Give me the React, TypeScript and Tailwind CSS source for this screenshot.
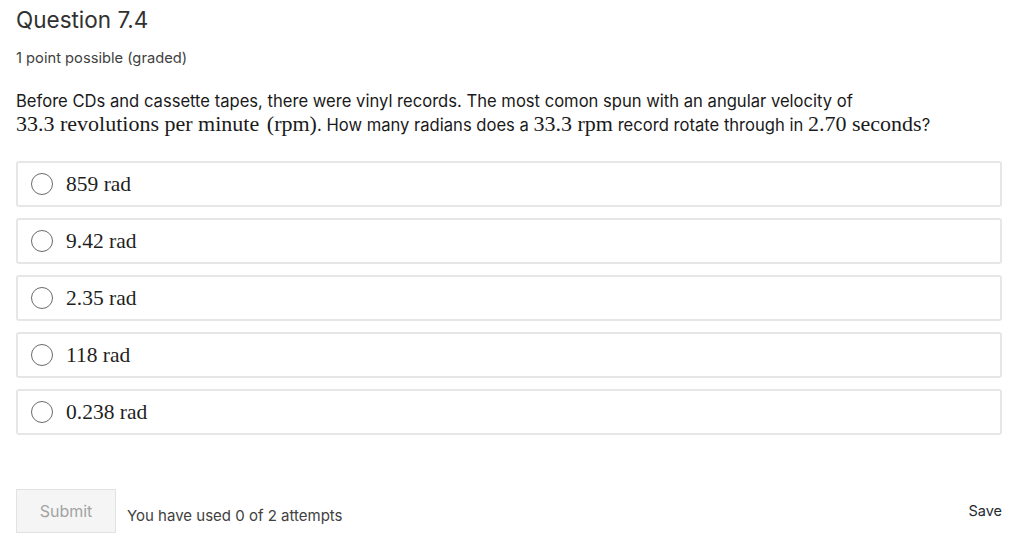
import { useState } from "react";

const options = ["859", "9.42", "2.35", "118", "0.238"];

const M = ({ children, className = "" }: { children: React.ReactNode; className?: string }) => (
  <span className={`font-['Liberation_Serif',serif] text-[22px] leading-[20px] ${className}`}>{children}</span>
);

export default function App() {
  const [selected, setSelected] = useState<number | null>(null);

  return (
    <div className="min-h-[539px] bg-white px-4 font-['Inter',sans-serif] text-[#313131]">
      <h2 className="pt-[6px] text-[22.5px] leading-[28px] font-normal">Question 7.4</h2>
      <p className="mt-[14px] text-[14.7px] leading-[20px] text-[#414141]">1 point possible (graded)</p>

      <p className="mt-[21px] text-[16.6px] leading-[24px] text-[#1a1a1a]">
        Before CDs and cassette tapes, there were vinyl records. The most comon spun with an angular velocity of{" "}
        <br />
        <M>33.3 revolutions per minute</M> <M className="ml-[3px]">(rpm)</M>. How many radians does a{" "}
        <M>33.3 rpm</M> record rotate through in <M>2.70 seconds</M>?
      </p>

      <div className="mt-[24px] flex flex-col gap-[11px] pr-[6px]">
        {options.map((value, index) => (
          <label
            key={value}
            className="flex h-[46px] cursor-pointer items-center gap-[13px] rounded-[3px] border-2 border-[#e6e6e6] px-[13px]"
          >
            <input
              type="radio"
              name="q"
              checked={selected === index}
              onChange={() => setSelected(index)}
              className="sr-only"
            />
            <span className="flex h-[22px] w-[22px] items-center justify-center rounded-full border border-[#6b6b6b]">
              {selected === index ? <span className="h-[12px] w-[12px] rounded-full bg-[#313131]" /> : null}
            </span>
            <span className="font-['Liberation_Serif',serif] text-[21.5px] text-[#1f1f1f]">{value} rad</span>
          </label>
        ))}
      </div>

      <div className="mt-[54px] flex items-center justify-between pr-[6px]">
        <div className="flex items-center gap-[11px]">
          <button
            type="button"
            disabled
            className="h-[44px] w-[100px] border border-[#e2e2e2] bg-[#f5f5f5] text-[16px] text-[#a3a3a3]"
          >
            Submit
          </button>
          <span className="mt-[10px] text-[15px] text-[#414141]">You have used 0 of 2 attempts</span>
        </div>
        <button type="button" className="text-[14.5px] text-[#1f2a30]">
          Save
        </button>
      </div>
    </div>
  );
}
